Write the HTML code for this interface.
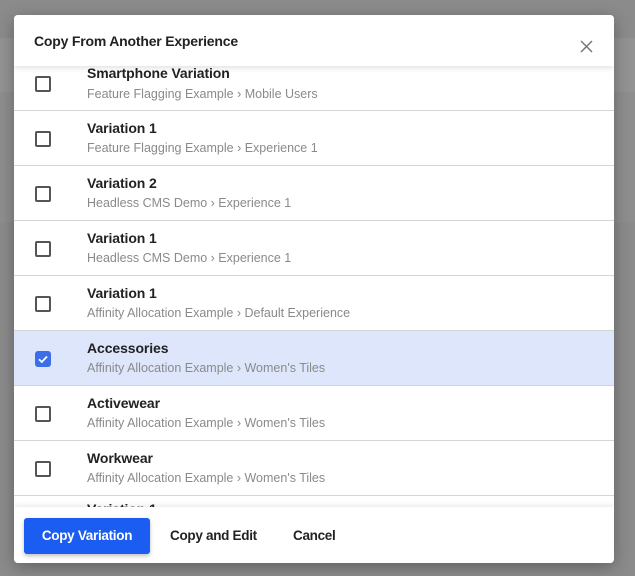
<!DOCTYPE html>
<html><head><style>
*{box-sizing:border-box;margin:0;padding:0}
body{width:635px;height:576px;background:#8b8b8b;font-family:"Liberation Sans",Arial,sans-serif;position:relative;overflow:hidden}
.band{position:absolute;left:0;right:0;top:38px;height:54px;background:#939393}
.band2{position:absolute;left:0;right:0;top:92px;height:130px;background:#8e8e8e}
.dlg{position:absolute;left:14px;top:15px;width:600px;height:548px;background:#fff;border-radius:4px;overflow:hidden;box-shadow:0 4px 16px rgba(0,0,0,.3)}
.hdr{position:absolute;left:0;top:0;width:600px;height:51px;background:#fff;z-index:2;box-shadow:0 2px 5px rgba(0,0,0,.12)}
.hdr h1{position:absolute;left:20px;top:18px;font-size:14px;font-weight:bold;color:#222;letter-spacing:-0.2px}
.x{position:absolute;right:21px;top:25px}
.list{position:absolute;left:0;top:51px;width:600px}
.row{position:relative;height:55px;border-bottom:1px solid #d4d4d4}
.row.sel{background:#dde6fb}
.cb{position:absolute;left:21px;top:20px;width:16px;height:16px;border:2px solid #555;border-radius:2px}
.sel .cb{border:none;background:#3b6ee8;border-radius:3px}
.t{position:absolute;left:73px;top:9px;font-size:14px;font-weight:bold;color:#222;letter-spacing:-0.1px}
.s{position:absolute;left:73px;top:30px;font-size:12.5px;color:#8a8a8a}
.ftr{position:absolute;left:0;top:492px;width:600px;height:56px;background:#fff;z-index:2;box-shadow:0 -2px 5px rgba(0,0,0,.08)}
.btn{position:absolute;top:11px;height:36px;line-height:36px;font-size:13.5px;font-weight:bold;color:#222;letter-spacing:-0.3px}
.p{left:10px;width:126px;background:#1b5cf1;color:#fff;text-align:center;border-radius:3px;box-shadow:0 2px 4px rgba(0,0,0,.25)}
</style></head><body>
<div class="band"></div><div class="band2"></div>
<div class="dlg">
<div class="hdr"><h1>Copy From Another Experience</h1>
<svg class="x" width="13" height="13" viewBox="0 0 13 13"><path d="M1 1L12 12M12 1L1 12" stroke="#777" stroke-width="1.5"/></svg></div>
<div class="list" style="top:41px">
<div class="row" style="height:55px"><div class="cb"></div><div class="t" style="top:9px">Smartphone Variation</div><div class="s" style="top:31px">Feature Flagging Example › Mobile Users</div></div>
<div class="row"><div class="cb"></div><div class="t">Variation 1</div><div class="s">Feature Flagging Example › Experience 1</div></div>
<div class="row"><div class="cb"></div><div class="t">Variation 2</div><div class="s">Headless CMS Demo › Experience 1</div></div>
<div class="row"><div class="cb"></div><div class="t">Variation 1</div><div class="s">Headless CMS Demo › Experience 1</div></div>
<div class="row"><div class="cb"></div><div class="t">Variation 1</div><div class="s">Affinity Allocation Example › Default Experience</div></div>
<div class="row sel"><div class="cb"><svg width="16" height="16" viewBox="0 0 16 16"><path d="M4 8.2L6.8 11L12 5.5" stroke="#fff" stroke-width="1.8" fill="none"/></svg></div><div class="t">Accessories</div><div class="s">Affinity Allocation Example › Women's Tiles</div></div>
<div class="row"><div class="cb"></div><div class="t">Activewear</div><div class="s">Affinity Allocation Example › Women's Tiles</div></div>
<div class="row"><div class="cb"></div><div class="t">Workwear</div><div class="s">Affinity Allocation Example › Women's Tiles</div></div>
<div class="row"><div class="cb"></div><div class="t" style="top:5px">Variation 1</div></div>
</div>
<div class="ftr">
<div class="btn p">Copy Variation</div>
<div class="btn" style="left:156px">Copy and Edit</div>
<div class="btn" style="left:279px">Cancel</div>
</div>
</div>
</body></html>
